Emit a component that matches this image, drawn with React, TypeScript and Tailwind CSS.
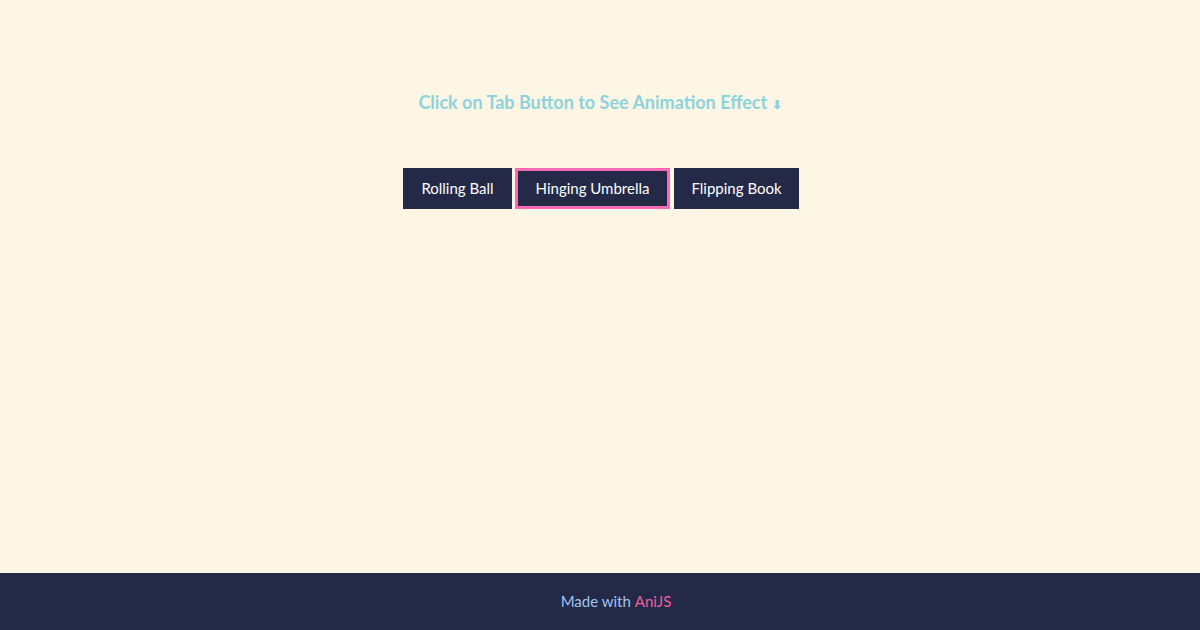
import React from "react";

export default function App() {
  const font = { fontFamily: '"Lato", "Open Sans", sans-serif' };
  return (
    <div className="flex h-[630px] w-full flex-col bg-[#fef6e4]" style={font}>
      <main className="flex flex-1 flex-col items-center pt-[89px]">
        <h1 className="h-[26px] text-[18px] font-bold leading-[26px] text-[#8bd3dd]">
          Click on Tab Button to See Animation Effect <span className="text-[12px]">⬇</span>
        </h1>
        <div className="mt-[53px] flex items-center gap-[3px] pl-[2px]">
          <button className="h-[41px] bg-[#232946] px-[18px] text-[15px] text-[#fffffe]">Rolling Ball</button>
          <button className="h-[41px] border-[3px] border-[#ff69b4] bg-[#232946] px-[18px] text-[15px] text-[#fffffe]">Hinging Umbrella</button>
          <button className="ml-[1px] h-[41px] bg-[#232946] px-[17px] text-[15px] text-[#fffffe]">Flipping Book</button>
        </div>
      </main>
      <footer className="flex h-[57px] items-center justify-center bg-[#232946] pl-[32px] text-[15px]">
        <span className="text-[#a0c4f2]">Made with </span>
        <span className="ml-[4px] text-[#f0609e]">AniJS</span>
      </footer>
    </div>
  );
}
